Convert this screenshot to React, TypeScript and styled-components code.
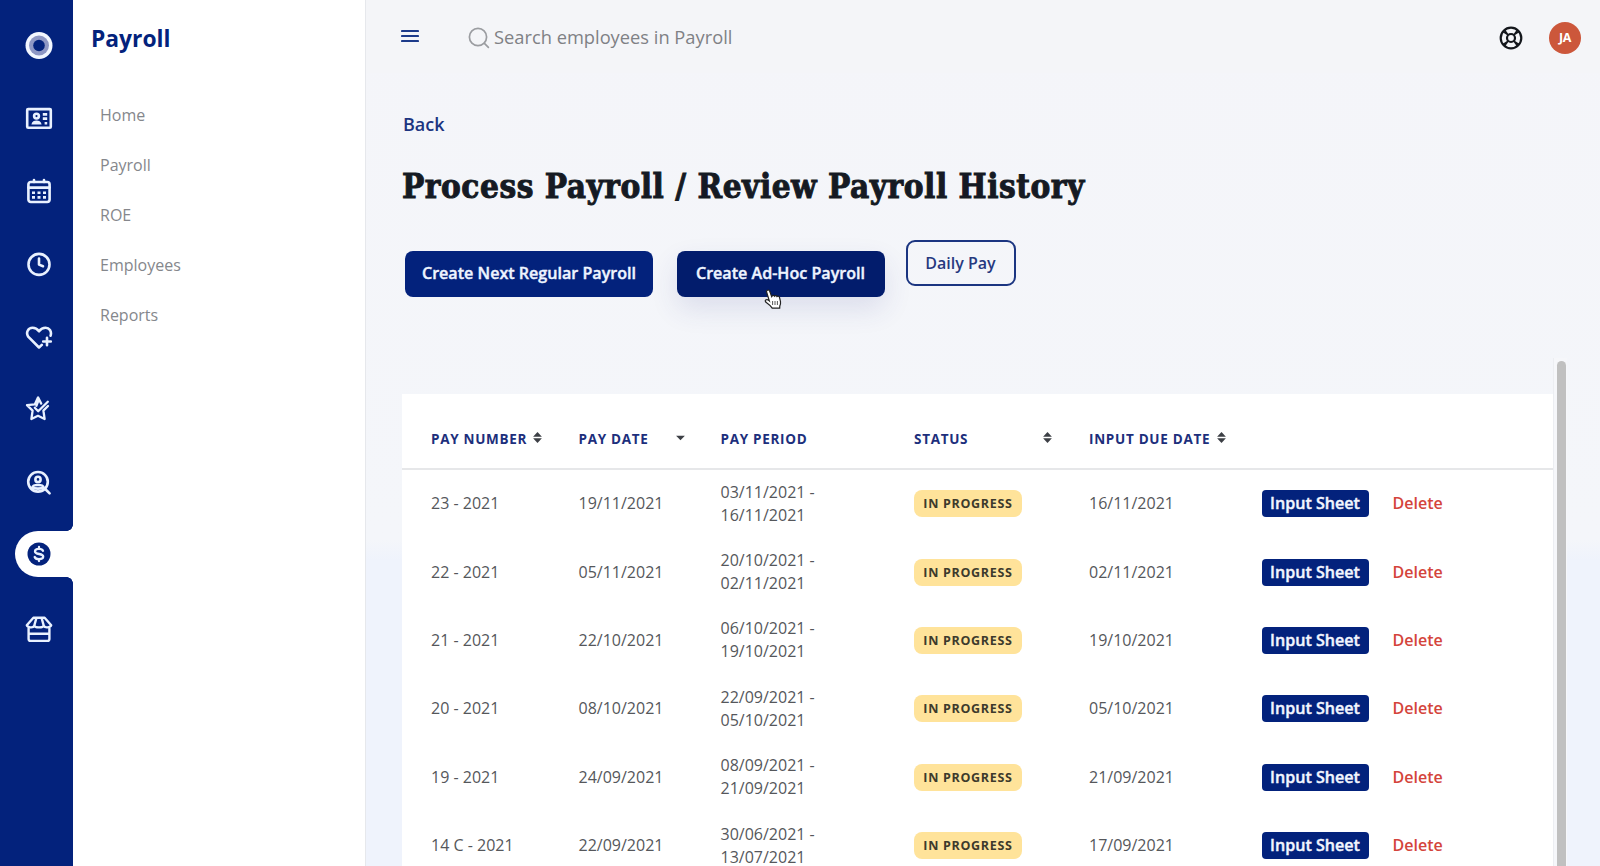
import React from "react";
import styled, { createGlobalStyle, css } from "styled-components";

const navy = "#03227c";

const Global = createGlobalStyle`
  * { box-sizing: border-box; }
  body { margin: 0; overflow: hidden; font-family: "Open Sans", "Noto Sans", sans-serif; }
  button { font-family: inherit; border: 0; padding: 0; background: none; white-space: nowrap; }
`;

const Page = styled.div`
  display: flex;
  width: 1600px;
  height: 866px;
  overflow: hidden;
  background: #f4f6fa;
`;

const Rail = styled.nav`
  flex: none;
  width: 73px;
  height: 100%;
  background: ${navy};
  padding-top: 9px;
  display: flex;
  flex-direction: column;
`;

const RailItem = styled.a<{ $active?: boolean }>`
  position: relative;
  flex: none;
  height: 46px;
  margin: 13.4px 0 13.4px 15px;
  padding-left: 10px;
  display: flex;
  align-items: center;
  color: #e9f1ff;
  ${(p) =>
    p.$active &&
    css`
      height: 46px;
      margin-top: 12.4px;
      margin-bottom: 15.4px;
      background: #fff;
      color: ${navy};
      border-radius: 23px 0 0 23px;
      &::before,
      &::after {
        content: "";
        position: absolute;
        right: 0;
        width: 6px;
        height: 6px;
      }
      &::before {
        top: -6px;
        background: radial-gradient(circle at 0 0, ${navy} 5.5px, #fff 6px);
      }
      &::after {
        bottom: -6px;
        background: radial-gradient(circle at 0 100%, ${navy} 5.5px, #fff 6px);
      }
    `}
`;

const RailSvg = styled.svg`
  display: block;
  width: 28px;
  height: 28px;
  fill: none;
  stroke: currentColor;
  stroke-width: 2.6;
  stroke-linecap: round;
  stroke-linejoin: round;
`;

const SideNav = styled.aside`
  flex: none;
  width: 293px;
  background: #fff;
  border-right: 1px solid #e6e8ec;
  padding: 22px 0 0 18px;
`;

const SideTitle = styled.h2`
  margin: 0 0 42.5px;
  font-size: 22.8px;
  line-height: 34px;
  font-weight: 700;
  color: ${navy};
`;

const SideLink = styled.a`
  display: block;
  height: 50.2px;
  padding-left: 9px;
  font-size: 16px;
  line-height: 32px;
  color: #85878c;
`;

const Main = styled.main`
  flex: 1;
  min-width: 0;
  display: flex;
  flex-direction: column;
  background: linear-gradient(#f4f5f9 0, #f4f6fa 540px, #eff3fc 560px);
`;

const TopBar = styled.header`
  flex: none;
  height: 73px;
  padding: 2px 19px 0 35px;
  display: flex;
  align-items: center;
  background: #f4f5f8;
`;

const MenuIcon = styled.svg`
  width: 18px;
  height: 14px;
  margin-top: -3px;
  stroke: #1c3a8a;
  stroke-width: 2.2;
  stroke-linecap: round;
`;

const Search = styled.div`
  display: flex;
  align-items: center;
  gap: 4px;
  margin-left: 49px;
  font-size: 18.3px;
  line-height: 26px;
  color: #7f8185;
`;

const SearchText = styled.span`
  padding-bottom: 2px;
`;

const TopActions = styled.div`
  display: flex;
  align-items: center;
  gap: 26px;
  margin-left: auto;
`;

const Avatar = styled.div`
  width: 32px;
  height: 32px;
  border-radius: 50%;
  background: #cc573b;
  color: #fff;
  font-size: 12.5px;
  font-weight: 700;
  line-height: 32px;
  letter-spacing: -0.3px;
  text-align: center;
`;

const Content = styled.section`
  flex: 1;
  min-height: 0;
  display: flex;
  flex-direction: column;
  padding: 38px 33px 0 36px;
`;

const Back = styled.a`
  padding-left: 1px;
  font-size: 18px;
  line-height: 26px;
  font-weight: 600;
  color: #1c3480;
`;

const Heading = styled.h1`
  margin: 25px 0 0;
  height: 50px;
  font-family: "DejaVu Serif Condensed", "DejaVu Serif", serif;
  font-stretch: condensed;
  font-size: 33px;
  line-height: 50px;
  font-weight: 700;
  letter-spacing: 0.53px;
  white-space: nowrap;
  color: #151a23;
  -webkit-text-stroke: 0.9px #151a23;
`;

const Actions = styled.div`
  display: flex;
  align-items: flex-start;
  height: 118px;
  padding: 28px 0 0 3px;
`;

const PrimaryButton = styled.button<{ $width: number; $hover?: boolean }>`
  position: relative;
  width: ${(p) => p.$width}px;
  height: 46px;
  margin: 11px 23.5px 0 0;
  padding-bottom: 2px;
  border-radius: 8px;
  background: ${(p) => (p.$hover ? "#021c6c" : navy)};
  box-shadow: ${(p) => (p.$hover ? "0 12px 28px rgba(50, 60, 140, 0.12)" : "none")};
  color: #eef4ff;
  font-size: 16.1px;
  font-weight: 600;
  -webkit-text-stroke: 0.4px #eef4ff;
`;

const OutlineButton = styled.button`
  width: 110px;
  height: 46px;
  margin-left: -2.5px;
  border: 2px solid #1b3581;
  border-radius: 9px;
  color: #27397f;
  font-size: 16px;
  font-weight: 600;
`;

const Cursor = styled.svg`
  position: absolute;
  left: 86px;
  top: 38px;
  width: 20px;
  height: 22px;
`;

const TableArea = styled.div`
  flex: 1;
  min-height: 0;
  display: flex;
  padding-top: 28px;
`;

const Table = styled.div`
  flex: none;
  width: 1151px;
  margin-top: 36px;
  background: #fff;
  overflow: hidden;
`;

const ScrollTrack = styled.div`
  flex: none;
  width: 14px;
  padding: 3px 0 0 3px;
  background: #f6f7fa;
  border-left: 1px solid #eceef2;
`;

const ScrollThumb = styled.div`
  width: 9px;
  height: 700px;
  border-radius: 5px;
  background: #c0c0c0;
`;

const Row = styled.div`
  display: grid;
  grid-template-columns: 147.5px 142px 193.5px 175px 172.5px 131px 1fr;
  align-items: center;
  height: 68.4px;
  padding-left: 29px;
  font-size: 16px;
  line-height: 23px;
  color: #55575b;
`;

const HeadRow = styled(Row)`
  height: 75.5px;
  padding-top: 17px;
  border-bottom: 2px solid #e6e7e9;
  font-size: 13.5px;
  font-weight: 700;
  letter-spacing: 0.7px;
  color: #1d2f7c;
`;

const HeadCell = styled.div<{ $iconGap?: number }>`
  display: flex;
  align-items: center;
  gap: ${(p) => p.$iconGap ?? 0}px;
  white-space: nowrap;
`;

const SortSvg = styled.svg`
  flex: none;
  width: 9px;
  height: 11px;
  margin-top: -3px;
  fill: #3c3f45;
`;

const Period = styled.div`
  width: 110px;
`;

const Badge = styled.span`
  display: block;
  width: 108px;
  height: 27px;
  border-radius: 8px;
  background: #ffe39a;
  color: #3d3a2c;
  font-size: 12.5px;
  line-height: 28px;
  font-weight: 700;
  letter-spacing: 0.7px;
  text-align: center;
`;

const InputSheet = styled.button`
  display: block;
  width: 107px;
  height: 27px;
  padding-bottom: 1px;
  border-radius: 4px;
  background: ${navy};
  color: #f2f6ff;
  font-size: 16.1px;
  line-height: 26px;
  font-weight: 600;
  -webkit-text-stroke: 0.4px #f2f6ff;
`;

const Delete = styled.a`
  color: #d4443b;
  font-weight: 600;
`;

const Sort = ({ down }: { down?: boolean }) => (
  <SortSvg viewBox="0 0 8 10">
    {!down && <path d="M4 0 8 4.3H0Z" />}
    <path d={down ? "M0 3.5H8L4 7.5Z" : "M0 5.7H8L4 10Z"} />
  </SortSvg>
);

const icons: { name: string; art: React.ReactNode }[] = [
  {
    name: "logo",
    art: (
      <g stroke="none" transform="translate(0 .5)">
        <circle cx="14" cy="14" r="13.5" fill="#f3f7ff" />
        <circle cx="14" cy="14" r="10" fill="#8e97c4" />
        <circle cx="14" cy="14" r="5.8" fill={navy} />
      </g>
    ),
  },
  {
    name: "people",
    art: (
      <g transform="translate(0 .6)">
        <rect x="2.2" y="4.5" width="23.6" height="18.6" rx="1" />
        <circle cx="11.5" cy="11.5" r="2.4" />
        <path d="M6.4 19.8c.6-3 2.8-3.8 5.1-3.8s4.5.8 5.1 3.8Z" fill="currentColor" stroke="none" />
        <path d="M17.8 9.8h4.4M17.8 14h4.4M19.6 18.6h2.6" strokeLinecap="butt" />
      </g>
    ),
  },
  {
    name: "calendar",
    art: (
      <g transform="translate(0 .4)">
        <rect x="3.4" y="4.6" width="21.2" height="20" rx="2.4" />
        <path d="M3.4 10.2h21.2M9 2.6v2M19 2.6v2" />
        <path d="M7 15.4h3M12.5 15.4h3M18 15.4h3M7 20h3M12.5 20h3M18 20h3" strokeLinecap="butt" />
      </g>
    ),
  },
  {
    name: "clock",
    art: (
      <g transform="translate(0 .4)">
        <circle cx="14" cy="14" r="10.5" />
        <path d="M14 8.2v6l4 1.6" />
      </g>
    ),
  },
  {
    name: "benefits",
    art: (
      <g transform="translate(0 .3)">
        <path d="M25.6 12.4c1.4-4.6-1.4-8-5-8-2.8 0-5 1.4-6.6 3.6-1.6-2.2-3.8-3.6-6.4-3.6-4.6 0-7 5-4.4 9L14 24.2l2.8-2.6" />
        <path d="M22 14.4v7.6M18.2 18.2h7.6" />
      </g>
    ),
  },
  {
    name: "performance",
    art: (
      <g transform="translate(-1 -.8)" strokeWidth="2.3">
        <path d="M17.2 9.4 14 3.2l-3.2 7-7.8.8 5.6 5.4-1.2 8.4 6.6-3.2 6.6 3.2-1.2-8.4 4.6-4.6" />
        <path d="m10.8 13.6 3.4 3.4 9.6-9.4M14 7.4l-1.6 4.2" />
      </g>
    ),
  },
  {
    name: "recruiting",
    art: (
      <g transform="translate(0 1.4)">
        <circle cx="13" cy="12.4" r="9.8" />
        <circle cx="13" cy="10" r="2.6" />
        <path d="M7.4 18c.4-1.6 2.6-2.4 5.6-2.4s5.2.8 5.6 2.4c-1.4 1.6-9.8 1.6-11.2 0M20.2 19.6l4.4 4.4" />
      </g>
    ),
  },
  {
    name: "payroll",
    art: (
      <g>
        <circle cx="14" cy="14" r="11.5" fill="currentColor" stroke="none" />
        <path
          d="M18 10.8c-.5-1.3-1.8-1.9-4-1.9-2.5 0-4 .9-4 2.5 0 3.6 8.2 1.6 8.2 5.1 0 1.7-1.6 2.6-4.2 2.6-2.4 0-3.8-.7-4.3-2.1M14 7v1.8M14 19.2V21"
          stroke="#e9f1ff"
          strokeWidth="2.3"
        />
      </g>
    ),
  },
  {
    name: "marketplace",
    art: (
      <g strokeWidth="2.4">
        <path d="M3.6 13.4V24c0 1.2.7 1.9 1.9 1.9h17c1.2 0 1.9-.7 1.9-1.9V13.4M3.6 18.7h20.8" />
        <path d="m8.4 2.8-6.6 7.4c.8 2.6 6.4 3 7.4.6.9 2.1 8.7 2.1 9.6 0 1 2.4 6.6 2 7.4-.6l-6.6-7.4ZM11.4 3 9.2 10.8M16.6 3l2.2 7.8" />
      </g>
    ),
  },
];

const rows = [
  ["23 - 2021", "19/11/2021", "03/11/2021 -", "16/11/2021", "16/11/2021"],
  ["22 - 2021", "05/11/2021", "20/10/2021 -", "02/11/2021", "02/11/2021"],
  ["21 - 2021", "22/10/2021", "06/10/2021 -", "19/10/2021", "19/10/2021"],
  ["20 - 2021", "08/10/2021", "22/09/2021 -", "05/10/2021", "05/10/2021"],
  ["19 - 2021", "24/09/2021", "08/09/2021 -", "21/09/2021", "21/09/2021"],
  ["14 C - 2021", "22/09/2021", "30/06/2021 -", "13/07/2021", "17/09/2021"],
];

export default function App() {
  return (
    <Page>
      <Global />
      <Rail>
        {icons.map(({ name, art }) => (
          <RailItem key={name} $active={name === "payroll"}>
            <RailSvg viewBox="0 0 28 28">{art}</RailSvg>
          </RailItem>
        ))}
      </Rail>
      <SideNav>
        <SideTitle>Payroll</SideTitle>
        {["Home", "Payroll", "ROE", "Employees", "Reports"].map((label) => (
          <SideLink key={label}>{label}</SideLink>
        ))}
      </SideNav>
      <Main>
        <TopBar>
          <MenuIcon viewBox="0 0 18 14">
            <path d="M1 2h16M1 7h16M1 12h16" />
          </MenuIcon>
          <Search>
            <svg width="22" height="22" viewBox="0 0 22 22" fill="none" stroke="#9b9da1" strokeWidth="1.7" strokeLinecap="round">
              <circle cx="10" cy="10" r="8.6" />
              <path d="m16.4 16.4 4 4" />
            </svg>
            <SearchText>Search employees in Payroll</SearchText>
          </Search>
          <TopActions>
            <svg width="24" height="24" viewBox="0 0 24 24" fill="none" stroke="#14171c" strokeWidth="2.2">
              <circle cx="12" cy="12" r="10.3" />
              <circle cx="12" cy="12" r="4" />
              <path d="m4.2 5.6 4.9 3.3M5.6 4.2l3.5 4.7M19.8 5.6l-4.9 3.3M18.4 4.2l-3.5 4.7M4.2 18.4l4.9-3.3M5.6 19.8l3.5-4.7M19.8 18.4l-4.9-3.3M18.4 19.8l-3.5-4.7" strokeWidth="1.5" />
            </svg>
            <Avatar>JA</Avatar>
          </TopActions>
        </TopBar>
        <Content>
          <Back>Back</Back>
          <Heading>Process Payroll / Review Payroll History</Heading>
          <Actions>
            <PrimaryButton $width={248}>Create Next Regular Payroll</PrimaryButton>
            <PrimaryButton $width={208} $hover>
              Create Ad-Hoc Payroll
              <Cursor viewBox="0 0 20 22">
                <path
                  d="M4.5 1.2c1-.5 1.9.1 2.2 1l2 5.4.4-.6c.8-.9 2-.7 2.4.2.8-.9 2-.6 2.5.3.9-.7 2.1-.3 2.5.8l1 4.2c.3 2-.1 3.2-.7 4.6l-.1 2H9.2c-1.2-2.2-3-3.6-5.6-5.4-1.4-1-1.7-2-.9-2.6.9-.7 2.5-.2 3.6.8L3.6 3c-.3-.8.1-1.5.9-1.8Z"
                  fill="#fff"
                  stroke="#222"
                  strokeWidth="1.2"
                />
                <path d="M9.6 12v4M12 12v4M14.4 12v4" stroke="#444" strokeWidth=".9" />
              </Cursor>
            </PrimaryButton>
            <OutlineButton>Daily Pay</OutlineButton>
          </Actions>
          <TableArea>
            <Table>
              <HeadRow>
                <HeadCell $iconGap={6}>PAY NUMBER<Sort /></HeadCell>
                <HeadCell $iconGap={27}>PAY DATE<Sort down /></HeadCell>
                <HeadCell>PAY PERIOD</HeadCell>
                <HeadCell $iconGap={75}>STATUS<Sort /></HeadCell>
                <HeadCell $iconGap={7}>INPUT DUE DATE<Sort /></HeadCell>
              </HeadRow>
              {rows.map(([num, date, from, to, due]) => (
                <Row key={num}>
                  <div>{num}</div>
                  <div>{date}</div>
                  <Period>{from} {to}</Period>
                  <Badge>IN PROGRESS</Badge>
                  <div>{due}</div>
                  <InputSheet>Input Sheet</InputSheet>
                  <Delete>Delete</Delete>
                </Row>
              ))}
            </Table>
            <ScrollTrack>
              <ScrollThumb />
            </ScrollTrack>
          </TableArea>
        </Content>
      </Main>
    </Page>
  );
}
